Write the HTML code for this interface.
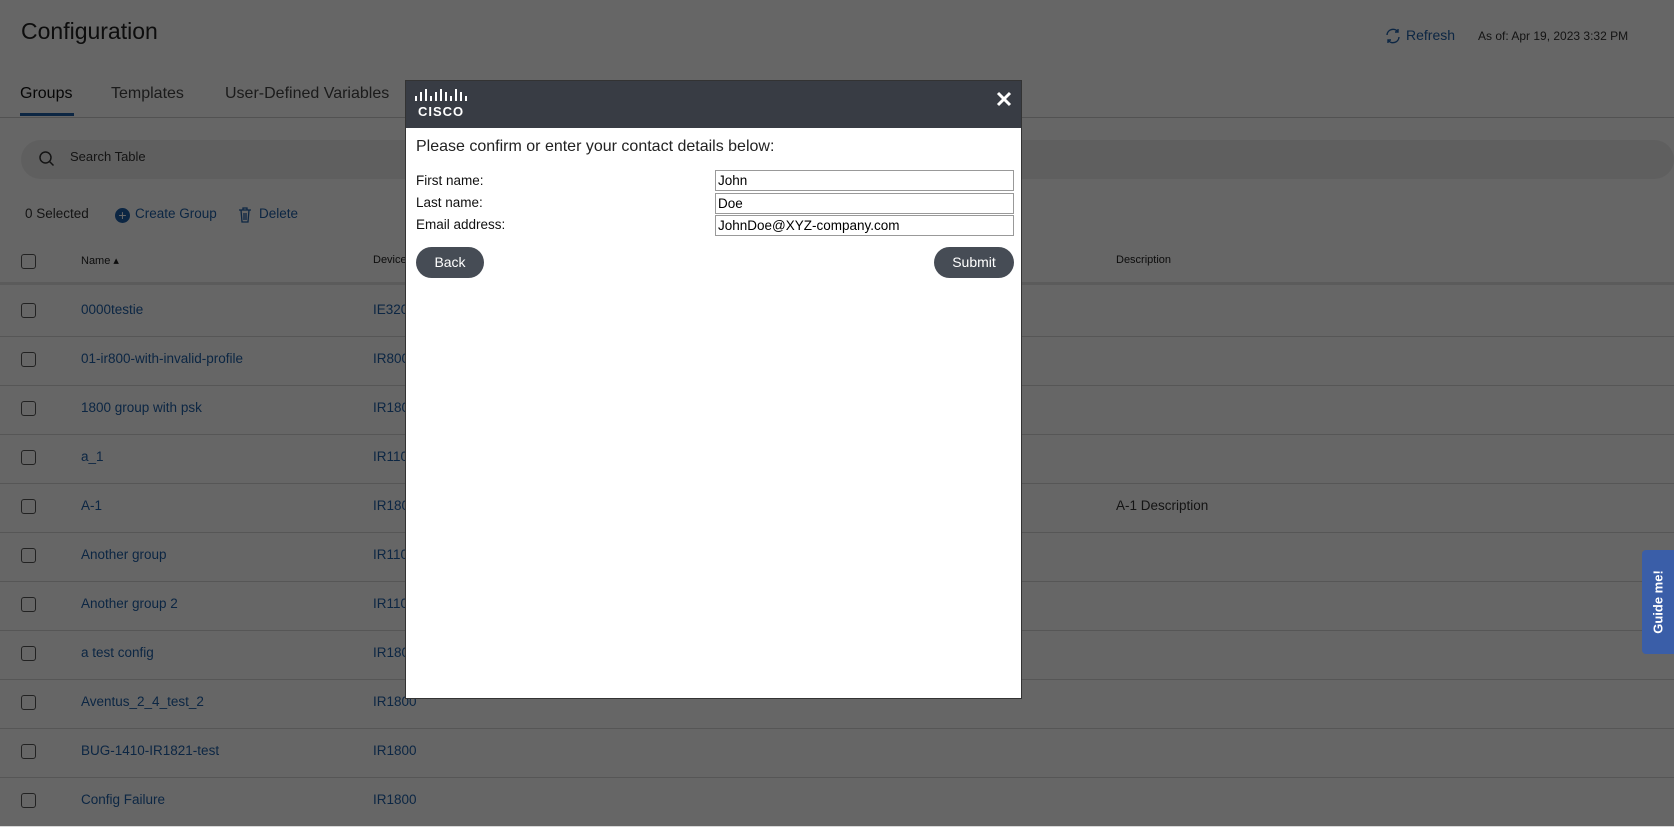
<!DOCTYPE html>
<html><head><meta charset="utf-8"><style>
*{box-sizing:border-box;margin:0;padding:0}
body{width:1674px;height:826px;overflow:hidden;position:relative;background:#fff;font-family:"Liberation Sans",sans-serif;color:#222}
.a{position:absolute;white-space:nowrap}
.link{color:#1e5fa8}
.row{position:absolute;left:0;width:1674px;height:49px;border-bottom:1px solid #d8d8d8}
.cb{position:absolute;left:21px;width:15px;height:15px;border:1.5px solid #555;border-radius:3px}
.ov{position:absolute;left:0;top:0;width:1674px;height:826px;background:rgba(0,0,0,0.6)}
.modal{position:absolute;left:405px;top:80px;width:617px;height:619px;background:#fff;border:1px solid #333}
.mh{height:47px;background:#383c44;position:relative}
.inp{position:absolute;left:309px;width:299px;height:21px;border:1px solid #999;font-size:13.5px;padding:2px 2px;color:#000}
.lbl{position:absolute;left:10px;font-size:13.5px;color:#111}
.btn{position:absolute;top:166px;height:31px;border-radius:16px;background:#464c55;color:#fff;font-size:14px;text-align:center;line-height:31px}
</style></head><body>
<div class="a" style="left:21px;top:18px;font-size:23px;color:#222">Configuration</div>
<svg class="a" style="left:1384px;top:27px" width="18" height="18" viewBox="0 0 18 18"><path d="M3 8a6 6 0 0 1 11-3M15 10a6 6 0 0 1-11 3" fill="none" stroke="#1e5fa8" stroke-width="1.4"/><path d="M14 2v3h-3M4 16v-3h3" fill="none" stroke="#1e5fa8" stroke-width="1.4"/></svg>
<div class="a link" style="left:1406px;top:27px;font-size:14px">Refresh</div>
<div class="a" style="left:1478px;top:29px;font-size:12px;color:#333">As of: Apr 19, 2023 3:32 PM</div>
<div class="a" style="left:20px;top:85px;font-size:16px;color:#111">Groups</div>
<div class="a" style="left:20px;top:113px;width:54px;height:3px;background:#1e5fa8"></div>
<div class="a" style="left:111px;top:85px;font-size:16px;color:#444">Templates</div>
<div class="a" style="left:225px;top:85px;font-size:16px;color:#444">User-Defined Variables</div>
<div class="a" style="left:0;top:117px;width:1674px;height:1px;background:#ccc"></div>
<div class="a" style="left:21px;top:140px;width:1653px;height:39px;background:#eee;border-radius:20px"></div>
<svg class="a" style="left:38px;top:150px" width="18" height="18"><circle cx="7.5" cy="7.5" r="5.5" fill="none" stroke="#333" stroke-width="1.5"/><path d="M11.5 11.5l4 4" stroke="#333" stroke-width="1.5"/></svg>
<div class="a" style="left:70px;top:149px;font-size:13px;color:#333">Search Table</div>
<div class="a" style="left:25px;top:206px;font-size:13.5px;color:#333">0 Selected</div>
<div class="a" style="left:115px;top:208px;width:15px;height:15px;border-radius:50%;background:#1e5fa8;color:#fff;font-size:14px;line-height:14px;text-align:center">+</div>
<div class="a link" style="left:135px;top:206px;font-size:13.5px">Create Group</div>
<svg class="a" style="left:238px;top:207px" width="14" height="16"><path d="M1 3h12M5 3V1h4v2M3 3l1 12h6l1-12M6 6v7M8 6v7" fill="none" stroke="#1e5fa8" stroke-width="1.3"/></svg>
<div class="a link" style="left:259px;top:206px;font-size:13.5px">Delete</div>
<div class="cb" style="top:254px"></div>
<div class="a" style="left:81px;top:254px;font-size:11px;color:#222">Name ▴</div>
<div class="a" style="left:373px;top:254px;font-size:11px;color:#222">Device</div>
<div class="a" style="left:1116px;top:254px;font-size:11px;color:#222">Description</div>
<div class="a" style="left:0;top:282px;width:1674px;height:3px;background:#e4e4e4"></div>
<div class="row" style="top:288px"><div class="cb" style="top:15px"></div><div class="a link" style="left:81px;top:14px;font-size:13.5px">0000testie</div><div class="a link" style="left:373px;top:14px;font-size:13.5px">IE3200</div></div>
<div class="row" style="top:337px"><div class="cb" style="top:15px"></div><div class="a link" style="left:81px;top:14px;font-size:13.5px">01-ir800-with-invalid-profile</div><div class="a link" style="left:373px;top:14px;font-size:13.5px">IR800</div></div>
<div class="row" style="top:386px"><div class="cb" style="top:15px"></div><div class="a link" style="left:81px;top:14px;font-size:13.5px">1800 group with psk</div><div class="a link" style="left:373px;top:14px;font-size:13.5px">IR1800</div></div>
<div class="row" style="top:435px"><div class="cb" style="top:15px"></div><div class="a link" style="left:81px;top:14px;font-size:13.5px">a_1</div><div class="a link" style="left:373px;top:14px;font-size:13.5px">IR1100</div></div>
<div class="row" style="top:484px"><div class="cb" style="top:15px"></div><div class="a link" style="left:81px;top:14px;font-size:13.5px">A-1</div><div class="a link" style="left:373px;top:14px;font-size:13.5px">IR1800</div><div class="a" style="left:1116px;top:14px;font-size:13.5px;color:#333">A-1 Description</div></div>
<div class="row" style="top:533px"><div class="cb" style="top:15px"></div><div class="a link" style="left:81px;top:14px;font-size:13.5px">Another group</div><div class="a link" style="left:373px;top:14px;font-size:13.5px">IR1100</div></div>
<div class="row" style="top:582px"><div class="cb" style="top:15px"></div><div class="a link" style="left:81px;top:14px;font-size:13.5px">Another group 2</div><div class="a link" style="left:373px;top:14px;font-size:13.5px">IR1100</div></div>
<div class="row" style="top:631px"><div class="cb" style="top:15px"></div><div class="a link" style="left:81px;top:14px;font-size:13.5px">a test config</div><div class="a link" style="left:373px;top:14px;font-size:13.5px">IR1800</div></div>
<div class="row" style="top:680px"><div class="cb" style="top:15px"></div><div class="a link" style="left:81px;top:14px;font-size:13.5px">Aventus_2_4_test_2</div><div class="a link" style="left:373px;top:14px;font-size:13.5px">IR1800</div></div>
<div class="row" style="top:729px"><div class="cb" style="top:15px"></div><div class="a link" style="left:81px;top:14px;font-size:13.5px">BUG-1410-IR1821-test</div><div class="a link" style="left:373px;top:14px;font-size:13.5px">IR1800</div></div>
<div class="row" style="top:778px"><div class="cb" style="top:15px"></div><div class="a link" style="left:81px;top:14px;font-size:13.5px">Config Failure</div><div class="a link" style="left:373px;top:14px;font-size:13.5px">IR1800</div></div>
<div class="ov"></div>
<div class="a" style="left:1642px;top:550px;width:32px;height:104px;background:#3a5ea8;border-radius:4px 0 0 4px"></div>
<div class="a" style="left:1658px;top:602px;transform:translate(-50%,-50%) rotate(-90deg);color:#fff;font-weight:bold;font-size:13px">Guide me!</div>
<div class="modal">
<div class="mh">
<svg class="a" style="left:9px;top:8px" width="52" height="14"><g fill="#fff"><rect x="0" y="7" width="2" height="5"/><rect x="5" y="3" width="2" height="9"/><rect x="10" y="0" width="2" height="12"/><rect x="15" y="7" width="2" height="5"/><rect x="20" y="3" width="2" height="9"/><rect x="25" y="0" width="2" height="12"/><rect x="30" y="3" width="2" height="9"/><rect x="35" y="7" width="2" height="5"/><rect x="40" y="0" width="2" height="12"/><rect x="45" y="3" width="2" height="9"/><rect x="50" y="7" width="2" height="5"/></g></svg>
<div class="a" style="left:12px;top:23px;color:#fff;font-weight:bold;font-size:13px;letter-spacing:1px">CISCO</div>
<svg class="a" style="left:590px;top:10px" width="16" height="16"><path d="M2 2l12 12M14 2L2 14" stroke="#fff" stroke-width="3"/></svg>
</div>
<div class="a" style="left:10px;top:57px;font-size:16px;color:#222">Please confirm or enter your contact details below:</div>
<div class="lbl" style="top:92px">First name:</div>
<div class="lbl" style="top:114px">Last name:</div>
<div class="lbl" style="top:136px">Email address:</div>
<div class="inp" style="top:89px">John</div>
<div class="inp" style="top:112px">Doe</div>
<div class="inp" style="top:134px">JohnDoe@XYZ-company.com</div>
<div class="btn" style="left:10px;width:68px">Back</div>
<div class="btn" style="left:528px;width:80px">Submit</div>
</div>
</body></html>
